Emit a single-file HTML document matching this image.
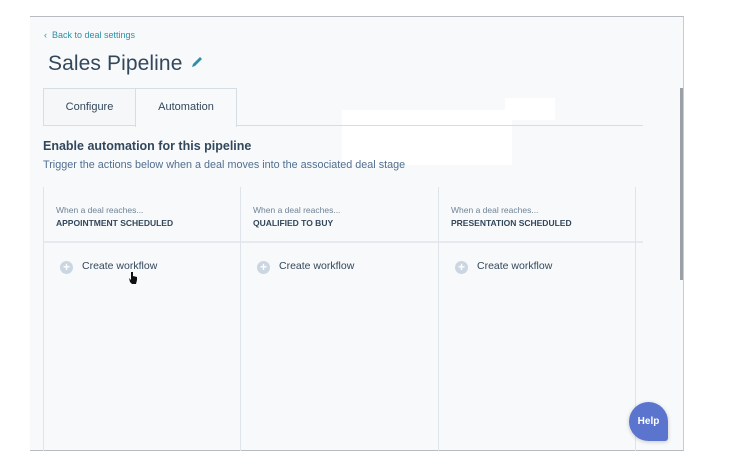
<!DOCTYPE html>
<html><head><style>
*{margin:0;padding:0;box-sizing:border-box}
body{width:730px;height:454px;background:#fff;font-family:"Liberation Sans",sans-serif;position:relative;overflow:hidden}
.frame{position:absolute;left:30px;top:16px;width:654px;height:435px;background:#f7f9fb;border-top:1px solid #b8bcc0;border-right:1px solid #c8ccd0;border-bottom:1px solid #b8bcc0}
.a{position:absolute}
.back{left:44px;top:30px;font-size:9px;color:#2e8fa6}
.title{left:48px;top:52px;font-size:21px;color:#33475b;letter-spacing:.1px}
.tab{top:88px;height:38px;border:1px solid #d6dde4;font-size:11px;color:#33475b;text-align:center;line-height:36px}
.h{left:43px;top:139px;font-size:12.5px;font-weight:bold;color:#33475b}
.sub{left:43px;top:159px;font-size:10.8px;color:#516f90}
.col{top:187px;height:264px;border-left:1px solid #dfe3eb;width:198px}
.col .w{position:absolute;left:12px;top:18px;font-size:8.5px;color:#6f8396}
.col .s{position:absolute;left:12px;top:31px;font-size:8.5px;font-weight:bold;color:#33475b}
.col .cw{position:absolute;left:16px;top:73px;font-size:10.5px;color:#33475b}
.col .pl{display:inline-block;width:13px;height:13px;border-radius:50%;background:#cbd6e2;color:#fff;font-size:12px;line-height:13px;text-align:center;vertical-align:-2px;margin-right:9px;font-weight:bold}
</style></head><body>
<div class="frame"></div>
<div class="a" style="left:342px;top:110px;width:170px;height:55px;background:#fff"></div>
<div class="a" style="left:505px;top:98px;width:50px;height:22px;background:#fff"></div>
<div class="a" style="left:680px;top:88px;width:3px;height:192px;background:#9aa0a6"></div>
<div class="a back">‹&nbsp; Back to deal settings</div>
<div class="a title">Sales Pipeline <svg width="14" height="14" viewBox="0 0 14 14" style="vertical-align:1px;margin-left:2px"><path d="M2 12 L3 9 L10 2 L12 4 L5 11 Z" fill="#2e8fa6"/></svg></div>
<div class="a tab" style="left:43px;width:93px;background:#f5f7f9">Configure</div>
<div class="a tab" style="left:135px;width:102px;background:#f7f9fb;border-bottom:none;height:39px">Automation</div>
<div class="a" style="left:236px;top:125px;width:407px;height:1px;background:#d6dde4"></div>
<div class="a h">Enable automation for this pipeline</div>
<div class="a sub">Trigger the actions below when a deal moves into the associated deal stage</div>
<div class="a" style="left:43px;top:241px;width:600px;height:2px;background:#e6eaee"></div>
<div class="a col" style="left:43px"><div class="w">When a deal reaches...</div><div class="s">APPOINTMENT SCHEDULED</div><div class="cw"><span class="pl">+</span>Create workflow</div></div>
<div class="a col" style="left:240px"><div class="w">When a deal reaches...</div><div class="s">QUALIFIED TO BUY</div><div class="cw"><span class="pl">+</span>Create workflow</div></div>
<div class="a col" style="left:438px;border-right:1px solid #dfe3eb"><div class="w">When a deal reaches...</div><div class="s">PRESENTATION SCHEDULED</div><div class="cw"><span class="pl">+</span>Create workflow</div></div>
<svg class="a" style="left:128px;top:271px" width="10" height="14" viewBox="0 0 10 14"><path d="M3 1 V9 L1 7 L2 11 L4 13 H8 L9 9 V6 L5 5 V1 Z" fill="#111"/></svg>
<div class="a" style="left:629px;top:402px;width:39px;height:39px;background:#5b74cd;border-radius:20px 20px 3px 20px;color:#fff;font-size:10px;font-weight:bold;line-height:39px;text-align:center;box-shadow:0 1px 4px rgba(0,0,0,.2)">Help</div>
</body></html>
